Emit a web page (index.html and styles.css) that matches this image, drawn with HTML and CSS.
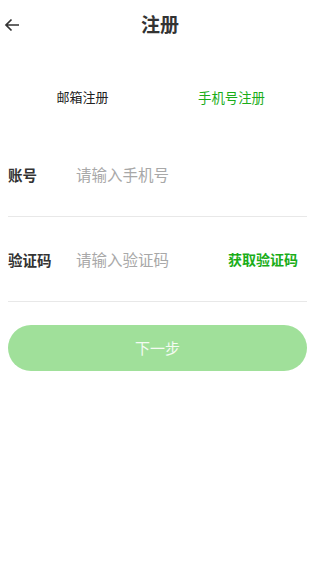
FILE: index.html
```html
<!DOCTYPE html>
<html lang="zh">
<head>
    <meta charset="UTF-8">
    <meta name="viewport" content="width=device-width, initial-scale=1.0">
    <title>注册</title>
    <link rel="stylesheet" href="styles.css">
</head>
<body>
    <div class="header">
        <span class="back">
            <svg width="18" height="18" viewBox="0 0 18 18"><path d="M16 9H3M8.5 3.5L3 9l5.5 5.5" fill="none" stroke="#333" stroke-width="1.7"/></svg>
        </span>
        <h1>注册</h1>
    </div>

    <div class="tabs">
        <div class="tab">邮箱注册</div>
        <div class="tab active">手机号注册</div>
    </div>

    <div class="form">
        <div class="row">
            <span class="label">账号</span>
            <span class="input">请输入手机号</span>
        </div>
        <div class="row">
            <span class="label">验证码</span>
            <span class="input">请输入验证码</span>
            <span class="code-btn">获取验证码</span>
        </div>
        <div class="submit">下一步</div>
    </div>
</body>
</html>
```

FILE: styles.css
```css
body {
    margin: 0;
    font-family: "Noto Sans CJK SC", "Noto Sans", sans-serif;
    background: #fff;
    color: #333;
}
.header {
    position: relative;
    height: 50px;
    display: flex;
    align-items: center;
    justify-content: center;
}
.back {
    position: absolute;
    left: 3px;
    top: 15px;
}
.header h1 {
    margin: 0 0 3px;
    font-size: 19px;
    line-height: 24px;
    font-weight: bold;
    color: #333;
}
.tabs {
    display: flex;
    padding: 0 8px;
    margin-top: 36px;
}
.tab {
    flex: 1;
    text-align: center;
    font-size: 13px;
    color: #222;
    line-height: 22px;
}
.tab.active {
    color: #1aad19;
    padding-right: 6px;
    font-size: 13.4px;
}
.form {
    padding: 0 13px 0 8px;
    margin-top: 24px;
}
.row {
    display: flex;
    align-items: center;
    height: 85px;
    border-bottom: 1px solid #e8e8e8;
    box-sizing: border-box;
}
.label {
    width: 68px;
    font-size: 14.5px;
    font-weight: bold;
    color: #333;
}
.input {
    flex: 1;
    font-size: 15.5px;
    color: #a8a8a8;
}
.code-btn {
    font-size: 14px;
    font-weight: bold;
    color: #1aad19;
    padding-right: 9px;
}
.submit {
    margin-top: 23px;
    height: 46px;
    border-radius: 23px;
    background: #a0e09a;
    color: #f4fbf3;
    font-size: 15px;
    text-align: center;
    line-height: 46px;
}
```
